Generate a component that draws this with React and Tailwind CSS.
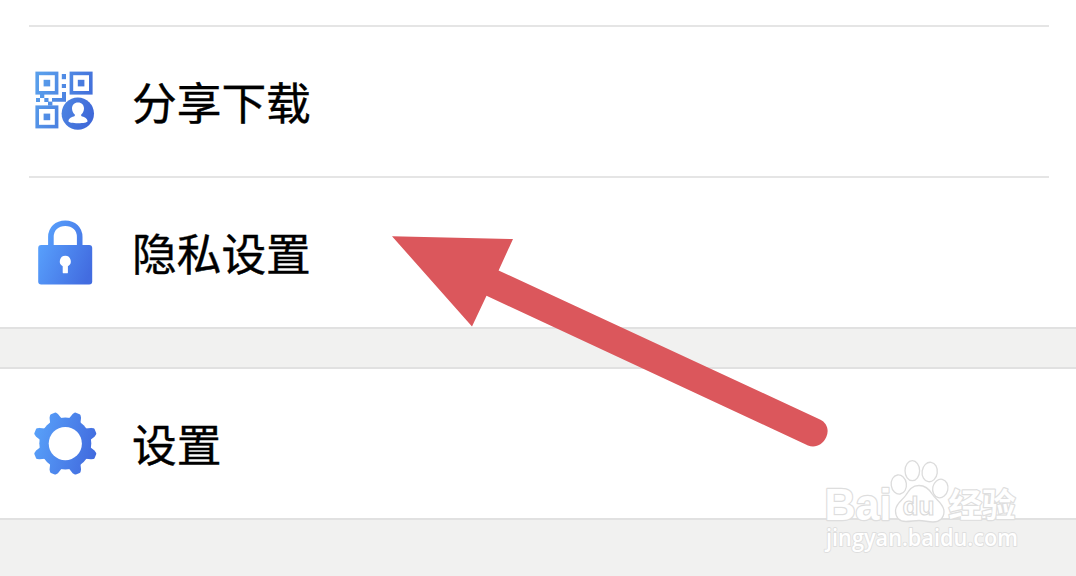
import React from "react";

const QrIcon = () => (
  <svg className="w-[84px] h-[84px]" viewBox="24 60 84 84">
    <defs>
      <linearGradient id="qr" gradientUnits="userSpaceOnUse" x1="36" y1="90" x2="94" y2="112">
        <stop offset="0" stopColor="#599eeb" />
        <stop offset="1" stopColor="#3f68d8" />
      </linearGradient>
    </defs>
    <g fill="none" stroke="url(#qr)" strokeWidth="3.6">
      <rect x="37.2" y="73.4" width="19.4" height="19.4" />
      <rect x="71.4" y="73.4" width="19.4" height="19.4" />
      <rect x="37.2" y="107.2" width="19.4" height="19.4" />
    </g>
    <g fill="url(#qr)">
      <rect x="43.6" y="79.8" width="6.6" height="6.6" />
      <rect x="77.8" y="79.8" width="6.6" height="6.6" />
      <rect x="43.6" y="113.6" width="6.6" height="6.6" />
      <rect x="61.8" y="74" width="4.2" height="5.2" />
      <rect x="61.8" y="84" width="4.2" height="4" />
      <path d="M62 92h4v9.8H52V98h10z" />
      <rect x="36" y="98" width="4" height="4" />
      <rect x="40" y="93.6" width="4.3" height="4.4" />
      <rect x="44.3" y="98" width="4.2" height="4" />
      <rect x="48" y="101.6" width="4.4" height="4" />
      <circle cx="77.8" cy="113.6" r="16.2" />
    </g>
    <path
      fill="#fff"
      d="M78 102.6c3.7 0 6 2.6 6 6 0 2.6-1.3 4.8-2.8 6v1.5c2.8 1.2 6.3 2 6.3 5.2 0 1.3-4.3 2-9.5 2s-9.5-.7-9.5-2c0-3.2 3.5-4 6.3-5.2v-1.5c-1.5-1.2-2.8-3.4-2.8-6 0-3.4 2.3-6 6-6z"
    />
  </svg>
);

const LockIcon = () => (
  <svg className="w-[84px] h-[84px]" viewBox="24 210.5 84 84">
    <defs>
      <linearGradient id="lock" gradientUnits="userSpaceOnUse" x1="38" y1="245" x2="92" y2="267">
        <stop offset="0" stopColor="#58a0fc" />
        <stop offset="1" stopColor="#426ce0" />
      </linearGradient>
    </defs>
    <path
      d="M50.9 246v-9.4c0-8.4 6-13.8 14.4-13.8s14.4 5.4 14.4 13.8v9.4"
      fill="none"
      stroke="url(#lock)"
      strokeWidth="5.6"
    />
    <rect x="38.2" y="244.4" width="54" height="39.6" rx="3" fill="url(#lock)" />
    <path
      d="M65.3 255.2a5.6 5.6 0 0 1 2.6 10.5v6.2q0 .9-.9.9h-3.4q-.9 0-.9-.9v-6.2a5.6 5.6 0 0 1 2.6-10.5z"
      fill="#fff"
    />
  </svg>
);

const teeth = [22.5, 67.5, 112.5, 157.5, 202.5, 247.5, 292.5, 337.5];

const GearIcon = () => (
  <svg className="w-[84px] h-[84px]" viewBox="0 0 84 84">
    <defs>
      <linearGradient id="gear" gradientUnits="userSpaceOnUse" x1="10" y1="33" x2="73" y2="50">
        <stop offset="0" stopColor="#58a0f9" />
        <stop offset="1" stopColor="#416ade" />
      </linearGradient>
      <mask id="gear-shape" maskUnits="userSpaceOnUse" x="0" y="0" width="84" height="84">
        <circle cx="41.3" cy="41.6" r="26" fill="#fff" />
        {teeth.map((angle) => (
          <path
            key={angle}
            d="M35.9 20l2.2-7.6 1.2-1.8h4l1.2 1.8 2.2 7.6z"
            fill="#fff"
            stroke="#fff"
            strokeWidth="3.2"
            strokeLinejoin="round"
            transform={`rotate(${angle} 41.3 41.6)`}
          />
        ))}
        <circle cx="41.3" cy="41.6" r="16.6" fill="#000" />
      </mask>
    </defs>
    <rect width="84" height="84" fill="url(#gear)" mask="url(#gear-shape)" />
  </svg>
);

const Arrow = () => (
  <svg className="absolute left-[380px] top-[225px] w-[460px] h-[235px]" viewBox="380 225 460 235">
    <path
      fill="#db575c"
      d="M392 236.2L513 239l-14.4 31.4L820 419.4c7 3.3 9.4 10.6 6.3 17.6-3.300 7.600-11.300 11.600-18.300 8.400L486.500 295.800 472 326.600z"
    />
  </svg>
);

const Watermark = () => (
  <svg className="absolute left-[810px] top-[450px] w-[220px] h-[110px]" viewBox="810 450 220 110">
    <g
      fill="#fff"
      stroke="#dedede"
      strokeWidth="2.4"
      strokeLinejoin="round"
      style={{ paintOrder: "stroke" }}
    >
      <text x="824.5" y="520" fontFamily="Liberation Sans, sans-serif" fontWeight="700" fontSize="44" textLength="67" lengthAdjust="spacingAndGlyphs">
        Bai
      </text>
      <text x="948.5" y="517" fontFamily="Noto Sans CJK SC, sans-serif" fontWeight="700" fontSize="33" textLength="67" lengthAdjust="spacingAndGlyphs">
        经验
      </text>
      <text x="826" y="546" fontFamily="Open Sans, sans-serif" fontSize="22.5" fontWeight="600" strokeWidth="1.8" textLength="192" lengthAdjust="spacingAndGlyphs">
        jingyan.baidu.com
      </text>
    </g>
    <g fill="#fff" stroke="#dcdcdc" strokeWidth="1.3">
      <ellipse cx="898.8" cy="484.5" rx="7.6" ry="9.6" transform="rotate(-8 898.8 484.5)" />
      <ellipse cx="912.3" cy="470.7" rx="7.3" ry="10" />
      <ellipse cx="929.7" cy="472" rx="7.6" ry="9.8" transform="rotate(8 929.7 472)" />
      <ellipse cx="940.3" cy="488.5" rx="7.6" ry="9.4" transform="rotate(12 940.3 488.5)" />
      <path d="M919 485.5c7 0 10.500 4 13.500 9 3.500 5.500 11.500 9 11.500 17 0 6.500-4.500 10.500-11 10.500-5 0-9-1.500-14-1.500s-8 1-13 1c-7 0-10.500-4.500-10.500-10.500 0-8 7-10.500 10.500-16 3.500-5.500 6-9.500 13-9.500z" />
    </g>
    <text
      x="902.5"
      y="515"
      fontFamily="Liberation Sans, sans-serif"
      fontWeight="700"
      fontSize="26"
      textLength="32"
      lengthAdjust="spacingAndGlyphs"
      fill="#fff"
      stroke="#dadada"
      strokeWidth="1.1"
    >
      du
    </text>
  </svg>
);

const Row = ({ icon, label }) => (
  <div className="flex items-center h-[149px] pl-6">
    {icon}
    <span className="ml-[24px] mb-[1px] text-[44.7px] leading-[60px] text-black whitespace-nowrap [-webkit-text-stroke:0.4px_black]">
      {label}
    </span>
  </div>
);

const Divider = () => <div className="h-[2px] ml-[29px] mr-[27px] bg-[#e5e5e5]" />;

const App = () => {
  return (
    <div className="relative w-[1076px] h-[576px] overflow-hidden bg-[#f1f1f0] font-['Noto_Sans_CJK_SC',sans-serif]">
      <div className="bg-white pt-[25px] border-b-2 border-[#e1e1e1]">
        <Divider />
        <Row icon={<QrIcon />} label="分享下载" />
        <Divider />
        <Row icon={<LockIcon />} label="隐私设置" />
      </div>

      <div className="mt-[38px] bg-white border-y-2 border-[#e1e1e1]">
        <Row icon={<GearIcon />} label="设置" />
      </div>

      <Arrow />
      <Watermark />
    </div>
  );
};

export default App;
